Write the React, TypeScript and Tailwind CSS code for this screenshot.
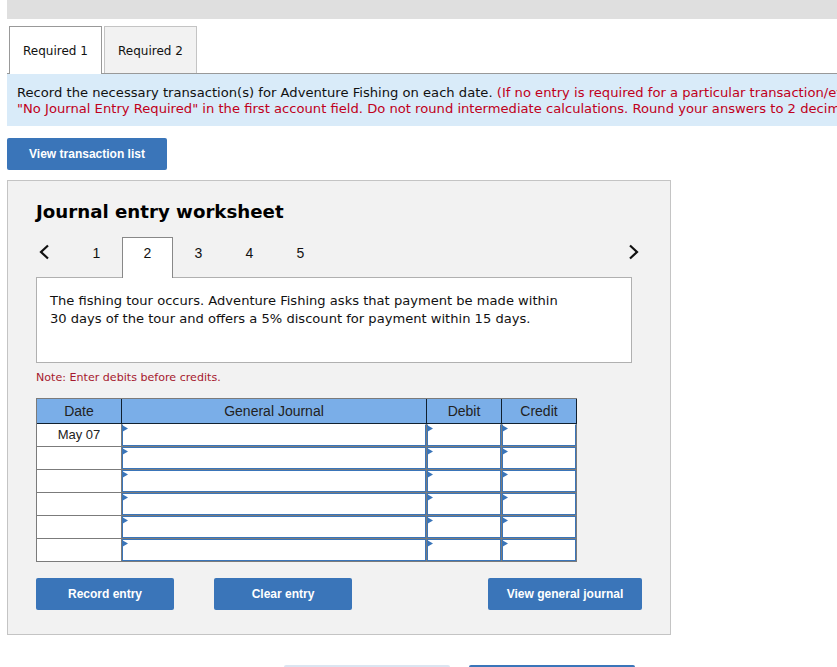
const dejavu = "font-['DejaVu_Sans',sans-serif]";
const arial = "font-['Liberation_Sans',Arial,sans-serif]";

function Chevron({ dir }: { dir: "left" | "right" }) {
  return (
    <svg width="10" height="16" viewBox="0 0 10 16" fill="none" stroke="#111" strokeWidth="2.2">
      <polyline points={dir === "left" ? "9,1.5 2,8 9,14.5" : "1,1.5 8,8 1,14.5"} />
    </svg>
  );
}

function BlueButton({ label, width }: { label: string; width: string }) {
  return (
    <button className={`${width} h-8 rounded-[2px] bg-[#3a75b9] text-white text-[12px] font-bold ${arial}`}>
      {label}
    </button>
  );
}

function EntryCell({ width, first }: { width: string; first: boolean }) {
  return (
    <div className={`${width} relative h-full border border-[#3a75b9] bg-white ${first ? "border-t-white" : ""}`}>
      <svg className="absolute -left-px top-0" width="6" height="7" viewBox="0 0 6 7">
        <polygon points="0,0 6,3.5 0,7" fill="#3a75b9" />
      </svg>
    </div>
  );
}

function JournalRow({ date, first }: { date?: string; first: boolean }) {
  return (
    <div className="flex h-[23px] border-b border-[#7b7b7b]">
      <div className={`w-[85px] border-r border-[#7b7b7b] bg-white text-center text-[13px] leading-[22px] text-[#222] ${arial}`}>
        {date}
      </div>
      <EntryCell width="w-[304px]" first={first} />
      <div className="w-px bg-[#7b7b7b]" />
      <EntryCell width="w-[74px]" first={first} />
      <div className="w-px bg-[#7b7b7b]" />
      <EntryCell width="w-[74px]" first={first} />
      <div className="w-px bg-[#7b7b7b]" />
    </div>
  );
}

export default function App() {
  const rows = ["May 07", "", "", "", "", ""];

  return (
    <div className={`h-[667px] w-[837px] overflow-hidden bg-white pl-[7px] ${dejavu}`}>
      <div className="h-[19px] bg-[#dfdfdf]" />

      {/* Required tabs */}
      <div className="mt-[7px] flex h-[48px] gap-[2px] border-b border-[#999] pl-[2px]">
        <div className="z-10 flex h-[48px] w-[93px] items-center justify-center border border-b-0 border-[#999] bg-white text-[12px] text-[#111]">
          Required 1
        </div>
        <div className="flex h-[47px] w-[93px] items-center justify-center border border-b-0 border-[#c4c4c4] bg-[#f2f2f2] pt-px text-[12px] text-[#111]">
          Required 2
        </div>
      </div>

      {/* Instructions */}
      <div className="h-[52px] overflow-hidden whitespace-nowrap bg-[#d9ebf9] px-[10px] pt-[11px] text-[13.14px] leading-4 text-[#111]">
        <div>
          Record the necessary transaction(s) for Adventure Fishing on each date.{" "}
          <span className="text-[#c00020]">(If no entry is required for a particular transaction/event, select</span>
        </div>
        <div className="text-[#c00020]">
          "No Journal Entry Required" in the first account field. Do not round intermediate calculations. Round your answers to 2 decimal places.)
        </div>
      </div>

      <div className="mt-3">
        <BlueButton label="View transaction list" width="w-40" />
      </div>

      {/* Worksheet panel */}
      <div className="mt-[10px] h-[455px] w-[664px] border border-[#c4c4c4] bg-[#f2f2f2] px-[28px]">
        <h2 className="mt-[19px] text-[18.2px] font-bold leading-6 text-black">Journal entry worksheet</h2>

        <div className="mt-[13px] flex h-[41px] w-[596px] items-center justify-between">
          <div className="flex h-full items-center">
            <div className="ml-[3px] flex w-[32px] pb-[12px]"><Chevron dir="left" /></div>
            {["1", "2", "3", "4", "5"].map((n) => (
              <div
                key={n}
                className={`flex h-[41px] w-[51px] items-center justify-center text-[14px] text-[#111] ${arial} ${
                  n === "2" ? "relative z-10 border border-b-0 border-[#888] bg-white pb-[9px]" : "pb-[8px]"
                }`}
              >
                {n}
              </div>
            ))}
          </div>
          <div className="mr-[-7px] flex pb-[12px]"><Chevron dir="right" /></div>
        </div>

        <div className="-mt-px h-[86px] w-[596px] border border-[#b0b0b0] bg-white px-[13px] pt-[14px] text-[13.08px] leading-[18px] text-[#111]">
          The fishing tour occurs. Adventure Fishing asks that payment be made within
          <br />
          30 days of the tour and offers a 5% discount for payment within 15 days.
        </div>

        <p className="mt-[7px] text-[11.1px] leading-4 text-[#a6192e]">Note: Enter debits before credits.</p>

        {/* General journal table */}
        <div className={`mt-[12px] w-[541px] border-l border-t border-[#7b7b7b] ${arial}`}>
          <div className="flex h-[25px] border-b border-[#10202f] bg-[#7aaee8] text-[14px] leading-6 text-[#222]">
            <div className="w-[85px] border-r border-[#10202f] text-center">Date</div>
            <div className="w-[305px] border-r border-[#10202f] text-center">General Journal</div>
            <div className="w-[75px] border-r border-[#10202f] text-center">Debit</div>
            <div className="w-[75px] border-r border-[#10202f] text-center">Credit</div>
          </div>
          {rows.map((date, i) => (
            <JournalRow key={i} date={date} first={i === 0} />
          ))}
        </div>

        <div className="mt-4 flex w-[606px]">
          <BlueButton label="Record entry" width="w-[138px]" />
          <div className="ml-10"><BlueButton label="Clear entry" width="w-[138px]" /></div>
          <div className="ml-auto"><BlueButton label="View general journal" width="w-[154px]" /></div>
        </div>
      </div>

      {/* Next page buttons, cut off by the window edge */}
      <div className="ml-[277px] mt-[30px] flex gap-[19px]">
        <div className="h-8 w-[166px] rounded-[2px] bg-[#dbe5f1]" />
        <div className="h-8 w-[166px] rounded-[2px] bg-[#3a75b9]" />
      </div>
    </div>
  );
}
